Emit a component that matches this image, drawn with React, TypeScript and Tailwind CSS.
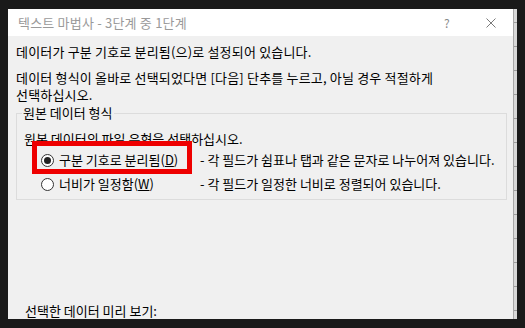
import React from "react";

const font = {
  fontFamily: '"Noto Sans CJK KR", "Noto Sans", "Liberation Sans", sans-serif',
};

function Radio({ checked }: { checked?: boolean }) {
  return (
    <span className="flex h-[13px] w-[13px] shrink-0 items-center justify-center rounded-full border border-[#333] bg-white">
      {checked && <span className="h-[7px] w-[7px] rounded-full bg-[#222]" />}
    </span>
  );
}

function TitleBar() {
  return (
    <div className="flex h-[31px] items-center bg-white pl-[10px] pr-[17px] text-[13px] tracking-[0.2px] text-[#9a9a9a]">
      <span className="flex-1">텍스트 마법사 - 3단계 중 1단계</span>
      <span className="mr-[36px] text-[12px] text-[#8a8a8a]">?</span>
      <svg width="10" height="10" viewBox="0 0 10 10" className="text-[#7a7a7a]">
        <path d="M0.5 0.5 L9.5 9.5 M9.5 0.5 L0.5 9.5" stroke="currentColor" strokeWidth="1" />
      </svg>
    </div>
  );
}

export default function App() {
  return (
    <div className="flex h-[328px] w-[525px] bg-[#1a1a1a] pl-[8px] pt-[9px]" style={font}>
      <div className="flex h-[310px] w-[505px] flex-col">
        <TitleBar />
        <div className="relative flex-1 bg-[#f0f0f0] pl-[8px] pr-[6px] pt-[8px] text-[13px] leading-[16px] text-black">
          <div className="tracking-[0.18px]">
            <p>데이터가 구분 기호로 분리됨(으)로 설정되어 있습니다.</p>
            <p className="mt-[9px] leading-[17px]">
              데이터 형식이 올바로 선택되었다면 [다음] 단추를 누르고, 아닐 경우 적절하게
              <br />
              선택하십시오.
            </p>
          </div>
          <fieldset className="mt-[2px] h-[95px] border border-[#dcdcdc] px-[5px]">
            <legend className="px-[1px]">원본 데이터 형식</legend>
            <div className="pl-[2px] pt-[10px]">
              <p>원본 데이터의 파일 유형을 선택하십시오.</p>
              <div className="mt-[5px] flex flex-col gap-[8px] pl-[17px]">
                <div className="flex items-center">
                  <Radio checked />
                  <span className="ml-[5px] w-[141px]">
                    구분 기호로 분리됨(<u>D</u>)
                  </span>
                  <span>- 각 필드가 쉼표나 탭과 같은 문자로 나누어져 있습니다.</span>
                </div>
                <div className="flex items-center">
                  <Radio />
                  <span className="ml-[5px] w-[141px]">
                    너비가 일정함(<u>W</u>)
                  </span>
                  <span>- 각 필드가 일정한 너비로 정렬되어 있습니다.</span>
                </div>
              </div>
            </div>
          </fieldset>
          <p className="mt-[103px] pl-[9px]">선택한 데이터 미리 보기:</p>
          <div className="pointer-events-none absolute left-[24px] top-[105px] h-[33px] w-[160px] border-[5px] border-[#ee0000]" />
        </div>
      </div>
      <div className="h-[310px] w-[4px] border-l border-[#a8a8a8] bg-[repeating-linear-gradient(to_bottom,#d8d8d8_0px,#d8d8d8_13px,#9c9c9c_13px,#9c9c9c_14px,#d8d8d8_14px,#d8d8d8_24px)]" />
    </div>
  );
}
